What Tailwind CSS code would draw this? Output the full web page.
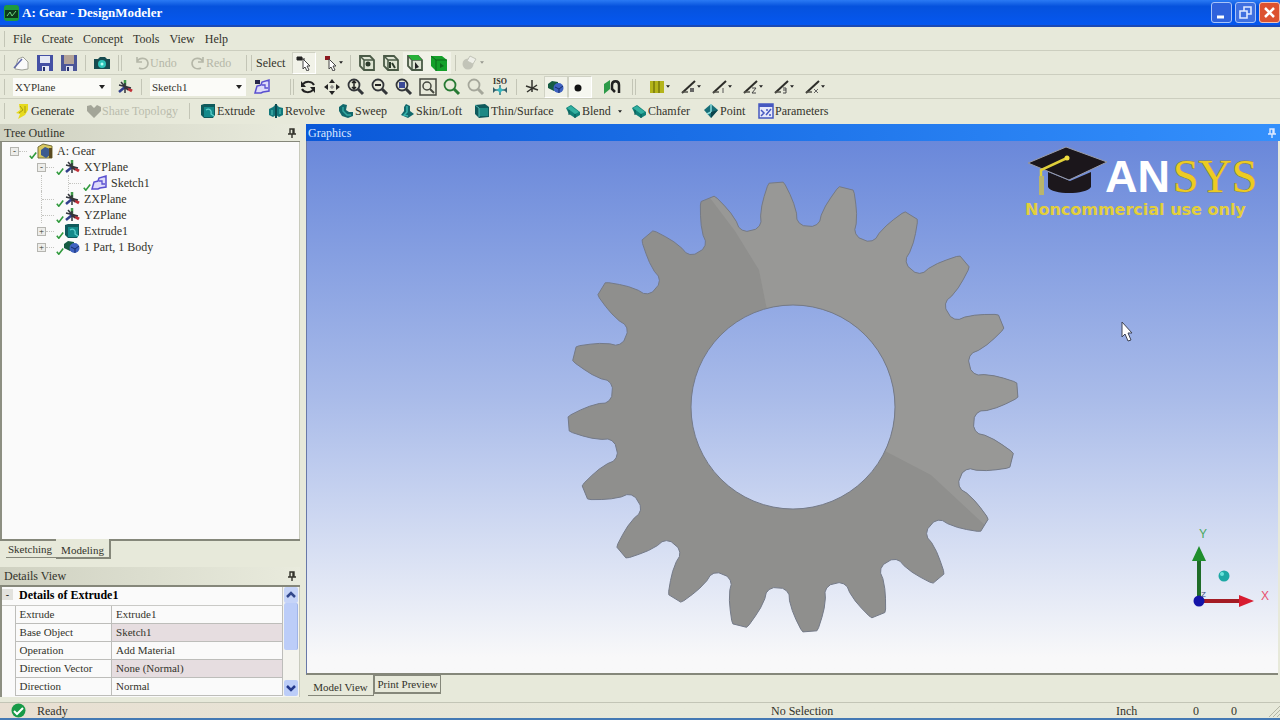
<!DOCTYPE html>
<html lang="en">

<head>
    <meta charset="UTF-8">
    <meta name="viewport" content="width=device-width, initial-scale=1.0">
    <title>A: Gear - DesignModeler</title>
    <script src="https://cdn.jsdelivr.net/npm/@tailwindcss/browser@4"></script>
</head>

<body class="h-screen overflow-hidden flex flex-col bg-[#e7e9da] text-[#33332b] text-[12px] leading-4 font-['Liberation_Serif',serif]">

    <!-- Shared icons -->
    <svg class="hidden">
        <symbol id="check" viewBox="0 0 10 10"><path d="M1 6l2.500 3L9 2" fill="none" stroke="#2f9a3c" stroke-width="2"/></symbol>
        <symbol id="axes" viewBox="0 0 16 16">
            <path d="M8 1v8" stroke="#3f9a48" stroke-width="2.500"/><path d="M8 8l7 4" stroke="#c03038" stroke-width="3"/>
            <path d="M8 8l-6 5" stroke="#32408c" stroke-width="2.500"/><path d="M2 6l12 3M8 4v10M4 3l7 8" stroke="#33363c" stroke-width="1.500"/>
        </symbol>
        <symbol id="sketch" viewBox="0 0 16 16">
            <path d="M1 14l2-7 4-1 1-3 7-2v11l-6 1-2 1z" fill="#dedbfa" stroke="#5a50d0" stroke-width="1.500"/>
            <path d="M8 6h3v3h3" fill="none" stroke="#5a50d0" stroke-width="1.300"/>
        </symbol>
        <symbol id="extrude" viewBox="0 0 16 16">
            <path d="M1 2l3-1h11v11l-2 3H4l-3-3z" fill="#0f5a5c"/><path d="M4 4h10v10H4z" fill="#14898a"/>
            <path d="M6 7c3-2 6 0 5 4l3 2" fill="none" stroke="#5cd0cc" stroke-width="1.200"/>
        </symbol>
        <symbol id="body" viewBox="0 0 16 16">
            <path d="M0 5l4-3 6 1v6l-4 3-6-3z" fill="#155c42"/><circle cx="10.500" cy="9" r="5" fill="#3f62c0"/>
            <path d="M7 8l4 2 4-3M11 10v4" fill="none" stroke="#142c6c"/>
        </symbol>
        <symbol id="wedge" viewBox="0 0 16 16">
            <path d="M1 5l5-3 9 7v3l-5 3-6-4z" fill="#108078"/><path d="M2 5l4-2 8 6-4 2z" fill="#32b0a0"/><path d="M4 7v5M10 11v4" stroke="#0a5450"/>
        </symbol>
        <symbol id="cube" viewBox="0 0 18 18">
            <path d="M2 2h10l4 4v10H6l-4-4z" fill="#dfe5d4" stroke="#4a5a46" stroke-width="1.800"/>
            <path d="M2 2l4 4h10M6 6v10" fill="none" stroke="#4a5a46" stroke-width="1.500"/>
        </symbol>
        <symbol id="lens" viewBox="0 0 18 18">
            <circle cx="7" cy="7" r="5.500" fill="none" stroke="currentColor" stroke-width="1.800"/><path d="M11 11l5 5" stroke="currentColor" stroke-width="3"/>
        </symbol>
        <symbol id="line" viewBox="0 0 16 16">
            <path d="M1 14L14 2" stroke="#2c2c28" stroke-width="2"/><path d="M1 13h6" stroke="#55554c" stroke-width="1.500"/>
        </symbol>
        <symbol id="caret" viewBox="0 0 6 4"><path d="M0 0h6L3 4z" fill="#222"/></symbol>
        <symbol id="pin" viewBox="0 0 8 10"><path d="M2 1h4v5H2zM0 6h8M4 6v4M5 1v5" fill="none" stroke="currentColor" stroke-width="1.400"/></symbol>
    </svg>

    <!-- Title bar -->
    <header class="h-[27px] shrink-0 flex items-center px-1 bg-linear-to-b from-[#2a7af4] via-[#0552dd] via-25% to-[#0557f0] border-b-2 border-[#1b49b4]">
        <svg class="size-4 mr-0.5" viewBox="0 0 16 16"><rect width="15" height="16" rx="3" fill="#1f9a3e"/><rect x="1" y="5" width="13" height="8" fill="#0d3a1a"/><path d="M3 11l3-4 2 4 4-5" fill="none" stroke="#6ad27e"/></svg>
        <h1 class="flex-1 text-white text-[13px] font-bold">A: Gear - DesignModeler</h1>
        <div class="flex gap-[3px] -mr-1">
            <button aria-label="Minimize" class="size-[21px] rounded-[3px] border border-[#a9c4f8] bg-[#2f62dc]"><svg viewBox="0 0 19 19"><path d="M5 14h7" stroke="#fff" stroke-width="3"/></svg></button>
            <button aria-label="Restore" class="size-[21px] rounded-[3px] border border-[#a9c4f8] bg-[#3f70e0]"><svg viewBox="0 0 19 19"><path d="M8 8V4h7v7h-4M4 8h7v7H4z" fill="none" stroke="#dfe9ff" stroke-width="1.600"/></svg></button>
            <button aria-label="Close" class="size-[21px] rounded-[3px] border border-[#f3c2b2] bg-[#dc5230]"><svg viewBox="0 0 19 19"><path d="M5 5l9 9M14 5l-9 9" stroke="#fff" stroke-width="2.500"/></svg></button>
        </div>
    </header>

    <!-- Menu -->
    <nav class="h-6 shrink-0 flex items-center gap-2.5 pl-1 border-b border-[#cccebf]">
        <span class="w-px h-4 -mr-0.5 bg-[#c3c5b6]"></span>
        <button>File</button>
        <button>Create</button>
        <button>Concept</button>
        <button>Tools</button>
        <button>View</button>
        <button>Help</button>
    </nav>

    <!-- File and selection toolbar -->
    <div class="h-6 shrink-0 flex items-center border-b border-[#cccebf]">
        <span class="w-px h-4 ml-1 mr-1 bg-[#c3c5b6]"></span>
        <button aria-label="New" class="w-6 flex justify-center"><svg class="size-4" viewBox="0 0 16 16"><path d="M5 4l5-2 5 5v7l-6 1-7-1z" fill="#fafafa" stroke="#a0a298"/><path d="M1 13l8-9" stroke="#6068a8" stroke-width="1.500"/></svg></button>
        <button aria-label="Save" class="w-6 flex justify-center"><svg class="size-4" viewBox="0 0 16 16"><path d="M0 0h16v16H0z" fill="#4450a4"/><path d="M3 1h10v7H3zM5 11h7v5H5z" fill="#e4e8f4"/><path d="M6 12h2v4H6z" fill="#26306c"/></svg></button>
        <button aria-label="Save as" class="w-6 flex justify-center"><svg class="size-4" viewBox="0 0 16 16"><path d="M0 0h16v16H0z" fill="#4c5698"/><path d="M3 0h10v9H3z" fill="#b4a498"/><path d="M5 11h7v5H5z" fill="#dfe2ee"/><path d="M6 12h2v4H6z" fill="#26306c"/></svg></button>
        <span class="w-px h-4 mx-1 bg-[#c3c5b6]"></span>
        <button aria-label="Image capture" class="w-6 flex justify-center"><svg class="w-[18px] h-4" viewBox="0 0 18 16"><path d="M1 4h4l2-2h5l2 2h3v10H1z" fill="#174c50"/><circle cx="9" cy="9" r="4" fill="#2cc4b8"/><circle cx="9" cy="9" r="1.500" fill="#b0fff2"/></svg></button>
        <span class="w-1 h-4 ml-1 mr-2 border-x border-[#c3c5b6]"></span>
        <button disabled class="w-[56px] flex items-center text-[#b5b7a8] ml-1"><svg class="w-4 h-4 shrink-0" viewBox="0 0 16 16"><path d="M3 2v5h5M3 7c2-5 10-5 11 1 0 5-5 7-9 5" fill="none" stroke="currentColor" stroke-width="1.600"/></svg>Undo</button>
        <button disabled class="w-[56px] flex items-center text-[#b5b7a8]"><svg class="w-4 h-4 shrink-0" viewBox="0 0 16 16"><path d="M13 2v5H8M13 7C11 2 3 2 2 8c0 5 5 7 9 5" fill="none" stroke="currentColor" stroke-width="1.600"/></svg>Redo</button>
        <span class="w-1.5 h-4 mr-1 border-x border-[#c3c5b6]"></span>
        <span class="w-9">Select</span>
        <button aria-label="Single select" class="w-6 h-[22px] flex justify-center items-center bg-[#f1f2e8] border border-[#d0d2c4] border-b-white border-r-white"><svg class="size-4" viewBox="0 0 16 16"><path d="M1 2h5v3H1zM4 4h5" fill="#222" stroke="#222"/><path d="M7 4v10l2-2 2 4 2-1-2-4h3z" fill="#fff" stroke="#444"/></svg></button>
        <button aria-label="Select mode" class="w-[34px] flex items-center justify-center"><svg class="size-4" viewBox="0 0 16 16"><path d="M2 1h5v4H2z" fill="#8c1a20"/><path d="M6 4v10l2-2 2 4 2-1-2-4h3z" fill="#fff" stroke="#444"/></svg><svg class="w-1 h-[3px]"><use href="#caret"/></svg></button>
        <span class="w-px h-4 mr-1 bg-[#c3c5b6]"></span>
        <button aria-label="Points" class="w-6 h-[22px] flex justify-center items-center"><svg class="size-[18px]" viewBox="0 0 18 18"><use href="#cube"/><circle cx="10" cy="10" r="2.500" fill="#2b3a2a"/></svg></button>
        <button aria-label="Edges" class="w-6 h-[22px] flex justify-center items-center"><svg class="size-[18px]" viewBox="0 0 18 18"><use href="#cube"/><path d="M8 8v6M10 9l3 5" stroke="#2b3a2a" stroke-width="2"/></svg></button>
        <button aria-label="Faces" class="w-6 h-[22px] flex justify-center items-center bg-[#f1f2e8]"><svg class="size-[18px]" viewBox="0 0 18 18"><use href="#cube"/><path d="M2 1h10l4 5H6z" fill="#27b038"/><path d="M9 8v7l4-2z" fill="#222"/></svg></button>
        <button aria-label="Bodies" class="w-6 h-[22px] flex justify-center items-center bg-[#f1f2e8]"><svg class="size-[18px]" viewBox="0 0 18 18"><path d="M1 2h11l5 4v11H6l-5-5z" fill="#14a02a"/><path d="M1 2l5 4h11M6 6v11" fill="none" stroke="#0c681a"/><path d="M10 9v5l4-2z" fill="#0c681a"/></svg></button>
        <span class="w-px h-4 mx-1 bg-[#c3c5b6]"></span>
        <button disabled aria-label="Extend selection" class="flex items-center"><svg class="w-[20px] h-4" viewBox="0 0 20 16"><circle cx="8" cy="9" r="5.500" fill="#c2c4b8"/><path d="M7 6l3-5 6 3-3 5z" fill="#eeefe8" stroke="#c2c4b8"/></svg><svg class="w-1 h-[3px] opacity-40"><use href="#caret"/></svg></button>
    </div>

    <!-- Plane, sketch and view toolbar -->
    <div class="h-6 shrink-0 flex items-center border-b border-[#cccebf]">
        <span class="w-px h-4 ml-1 mr-2 bg-[#c3c5b6]"></span>
        <div class="relative w-[98px] flex items-center">
            <select aria-label="Active plane" class="appearance-none w-full h-[18px] bg-[#fbfbf8] pl-0.5 text-[11px] leading-4"><option>XYPlane</option></select>
            <svg class="absolute right-1.5 w-1.5 h-1 pointer-events-none"><use href="#caret"/></svg>
        </div>
        <button aria-label="New plane" class="w-7 flex justify-center"><svg class="size-4"><use href="#axes"/></svg></button>
        <span class="w-px h-4 mr-2 ml-0.5 bg-[#c3c5b6]"></span>
        <div class="relative w-[96px] flex items-center">
            <select aria-label="Active sketch" class="appearance-none w-full h-[18px] bg-[#fbfbf8] pl-0.5 text-[11px] leading-4"><option>Sketch1</option></select>
            <svg class="absolute right-1 w-1.5 h-1 pointer-events-none"><use href="#caret"/></svg>
        </div>
        <button aria-label="New sketch" class="w-8 flex justify-center"><svg class="size-4" viewBox="0 0 16 16"><use href="#sketch"/><path d="M1 1h5v4H1z" fill="#26264a"/></svg></button>
        <span class="w-1 h-4 ml-3 mr-1 border-x border-[#c3c5b6]"></span>
        <button aria-label="Rotate" class="w-6 -ml-0.5 flex justify-center"><svg class="size-4" viewBox="0 0 16 16"><path d="M14 6C12 2 6 2 3 5M2 10c2 4 8 4 11 1" fill="none" stroke="#222" stroke-width="2"/><path d="M1 2v6h5zM15 14V8h-5z" fill="#222"/></svg></button>
        <button aria-label="Pan" class="w-6 flex justify-center"><svg class="size-4" viewBox="0 0 16 16"><path d="M8 0l3 4H5zM8 16l3-4H5zM0 8l4-3v6zM16 8l-4-3v6z" fill="#222"/><path d="M8 6v4M6 8h4" stroke="#777"/></svg></button>
        <button aria-label="Zoom" class="w-6 flex justify-center text-[#33363a]"><svg class="size-[18px]" viewBox="0 0 18 18"><use href="#lens"/><path d="M7 3v8M5 5l2-2 2 2M5 9l2 2 2-2" fill="none" stroke="#222" stroke-width="1.500"/></svg></button>
        <button aria-label="Zoom out" class="w-6 flex justify-center text-[#33363a]"><svg class="size-[18px]" viewBox="0 0 18 18"><use href="#lens"/><path d="M4 7h6" stroke="#222" stroke-width="2"/></svg></button>
        <button aria-label="Box zoom" class="w-6 flex justify-center text-[#33363a]"><svg class="size-[18px]" viewBox="0 0 18 18"><use href="#lens"/><path d="M4 4h6v6H4z" fill="#3c4a98"/></svg></button>
        <button aria-label="Zoom to fit" class="w-6 flex justify-center text-[#454840]"><svg class="size-[18px]" viewBox="0 0 18 18"><path d="M1 1h16v16H1z" fill="none" stroke="currentColor" stroke-width="1.500"/><circle cx="8" cy="8" r="4" fill="none" stroke="currentColor" stroke-width="1.500"/><path d="M11 11l4 4" stroke="currentColor" stroke-width="2"/></svg></button>
        <button aria-label="Magnifier" class="w-6 flex justify-center text-[#277a34]"><svg class="size-[18px]"><use href="#lens"/></svg></button>
        <button disabled aria-label="Previous view" class="w-6 flex justify-center text-[#a5a79b]"><svg class="size-[18px]"><use href="#lens"/></svg></button>
        <button aria-label="ISO view" class="w-6 flex flex-col items-center"><span class="text-[8px] leading-[7px] font-bold">ISO</span><svg class="w-4 h-[10px]" viewBox="0 0 16 10"><path d="M8 0v10M1 5h14" stroke="#2f7a84" stroke-width="1.500"/><path d="M5 5l3-3 3 3-3 3z" fill="#35b8c0"/><path d="M1 2v6l3-3zM15 2v6l-3-3z" fill="#35606c"/></svg></button>
        <span class="w-px h-4 ml-1 mr-[3px] bg-[#c3c5b6]"></span>
        <button aria-label="Look at plane" class="w-6 flex justify-center"><svg class="size-4" viewBox="0 0 16 16"><path d="M8 1v12M2 7l12 4M13 6L3 13" stroke="#33332e" stroke-width="1.500"/></svg></button>
        <button aria-label="Display model" class="w-6 h-[22px] flex justify-center items-center bg-[#f1f2e8] border border-[#d0d2c4] border-b-white"><svg class="size-4"><use href="#body"/></svg></button>
        <button aria-label="Display points" class="w-6 h-[22px] flex justify-center items-center bg-[#f6f7f0] border border-[#d0d2c4] border-b-white border-r-white"><svg class="size-4" viewBox="0 0 16 16"><circle cx="6" cy="9" r="3.500" fill="#111"/></svg></button>
        <button aria-label="Look at face" class="w-6 h-[22px] ml-2 flex justify-center items-center"><svg class="size-[18px]" viewBox="0 0 18 18"><path d="M1 6l6-4v9l-6 5z" fill="#2c9a48"/><path d="M9 7c0-5 7-5 7 0v8M9 7v4l3 3" fill="none" stroke="#222" stroke-width="2.500"/></svg></button>
        <span class="w-1 h-4 ml-2 mr-2 border-x border-[#c3c5b6]"></span>
        <button aria-label="Face coloring" class="w-[31px] flex items-center justify-center gap-0.5"><svg class="w-[14px] h-3" viewBox="0 0 14 12"><path d="M0 0h14v12H0z" fill="#b4b41a"/><path d="M4 0v12M9 0v12" stroke="#77780c" stroke-width="1.500"/></svg><svg class="w-1 h-[3px]"><use href="#caret"/></svg></button>
        <button aria-label="Edge coloring" class="w-[31px] flex items-center justify-center"><svg class="size-4" viewBox="0 0 16 16"><use href="#line"/><path d="M9 9h4v4H9z" fill="#666"/></svg><svg class="w-1 h-[3px]"><use href="#caret"/></svg></button>
        <button aria-label="Edge joints 1" class="w-[31px] flex items-center justify-center"><svg class="size-4" viewBox="0 0 16 16"><use href="#line"/><path d="M11 9v5" stroke="#555"/></svg><svg class="w-1 h-[3px]"><use href="#caret"/></svg></button>
        <button aria-label="Edge joints 2" class="w-[31px] flex items-center justify-center"><svg class="size-4" viewBox="0 0 16 16"><use href="#line"/><path d="M9 9h4l-4 5h4" fill="none" stroke="#444"/></svg><svg class="w-1 h-[3px]"><use href="#caret"/></svg></button>
        <button aria-label="Edge joints 3" class="w-[31px] flex items-center justify-center"><svg class="size-4" viewBox="0 0 16 16"><use href="#line"/><path d="M9 9h3v5H9M9 11h3" fill="none" stroke="#444"/></svg><svg class="w-1 h-[3px]"><use href="#caret"/></svg></button>
        <button aria-label="Edge joints x" class="w-[31px] flex items-center justify-center"><svg class="size-4" viewBox="0 0 16 16"><use href="#line"/><path d="M9 10l4 4M13 10l-4 4" fill="none" stroke="#666"/></svg><svg class="w-1 h-[3px]"><use href="#caret"/></svg></button>
    </div>

    <!-- Feature toolbar -->
    <div class="h-6 shrink-0 flex items-center">
        <span class="w-px h-4 ml-1 mr-2.5 bg-[#c3c5b6]"></span>
        <button class="w-[71px] flex items-center"><svg class="size-4 shrink-0" viewBox="0 0 16 16"><path d="M4 1h9v6l-3 5-7 4 2-5-4-1 4-3z" fill="#e6da1e"/><path d="M5 3l3 4-4 3M10 3v7" fill="none" stroke="#a89a10"/></svg>Generate</button>
        <button disabled class="w-[103px] flex items-center text-[#babcad]"><svg class="size-4 shrink-0" viewBox="0 0 16 16"><path d="M1 3l4-1 3 3 3-3 4 2v4l-7 7-7-7z" fill="#a3a598"/></svg>Share Topology</button>
        <span class="w-px h-4 mr-[10px] bg-[#c3c5b6]"></span>
        <button class="w-[68px] flex items-center gap-px"><svg class="size-4 shrink-0"><use href="#extrude"/></svg>Extrude</button>
        <button class="w-[70px] flex items-center gap-px"><svg class="size-4 shrink-0" viewBox="0 0 16 16"><path d="M8 1l3 3 4 1v7l-4 2-3-2-3 2-4-2V6l4-2z" fill="#12787c"/><path d="M8 1v14" stroke="#0b4a50" stroke-width="2"/><path d="M4 7v5M12 6v5" stroke="#57c8c0"/></svg>Revolve</button>
        <button class="w-[61px] flex items-center gap-px"><svg class="size-4 shrink-0" viewBox="0 0 16 16"><path d="M1 4l4-3 4 1-1 5 3 2 4 0v4l-5 2-6-2-3-5z" fill="#12686c"/><path d="M5 4v4l4 4h4" fill="none" stroke="#32a8a0" stroke-width="1.500"/></svg>Sweep</button>
        <button class="w-[75px] flex items-center gap-px"><svg class="size-4 shrink-0" viewBox="0 0 16 16"><path d="M7 1l4 2v5l4 3-6 4-7-3 3-4V4z" fill="#12686c"/><path d="M8 3v6l-3 3 4 1" fill="none" stroke="#38b4ac" stroke-width="1.500"/></svg>Skin/Loft</button>
        <button class="w-[91px] flex items-center gap-px"><svg class="size-4 shrink-0" viewBox="0 0 16 16"><path d="M1 2l10-1 4 3v10l-10 1-4-4z" fill="#0f5a5c"/><path d="M5 5h9v8H5z" fill="#1c8884"/><path d="M1 2l4 3v9" fill="none" stroke="#53b8b0"/></svg>Thin/Surface</button>
        <button class="w-[66px] flex items-center gap-px"><svg class="size-4 shrink-0"><use href="#wedge"/></svg>Blend<svg class="w-1 h-[3px] ml-1.5"><use href="#caret"/></svg></button>
        <button class="w-[72px] flex items-center gap-px"><svg class="size-4 shrink-0"><use href="#wedge"/></svg>Chamfer</button>
        <button class="w-[55px] flex items-center gap-px"><svg class="size-4 shrink-0" viewBox="0 0 16 16"><path d="M1 7l7-6 7 6-7 8z" fill="#176e78"/><path d="M8 1v8l-4 2" fill="none" stroke="#8adcdc" stroke-width="1.500"/><path d="M8 9l7-2-7 8z" fill="#0c444c"/></svg>Point</button>
        <button class="flex items-center gap-px"><svg class="size-4 shrink-0" viewBox="0 0 16 16"><path d="M1 1h14v14H1z" fill="#e6e8fa" stroke="#4658c0" stroke-width="1.500"/><path d="M1 1h14v3H1z" fill="#4658c0"/><path d="M3 7l3 3-3 3M8 12l5-6M8 7h2M11 12h2" fill="none" stroke="#4658c0" stroke-width="1.500"/></svg>Parameters</button>
    </div>

    <main class="flex-1 min-h-0 flex pt-px">
        <!-- Tree and details -->
        <aside class="w-[300px] shrink-0 flex flex-col mr-1.5">
            <h2 class="h-[18px] shrink-0 flex items-center justify-between pl-1 pr-1 bg-linear-to-r from-[#cfd1c1] to-[#e9ebdd] border-b border-[#85877a]">Tree Outline<svg class="w-2 h-2.5"><use href="#pin"/></svg></h2>
            <div class="flex-1 min-h-0 bg-[#fafafa] border-l-2 border-r border-l-[#8d8f82] border-r-[#c8cabc] pt-px">
                <ul id="tree"></ul>
            </div>
            <div class="h-[22px] shrink-0 flex items-start border-t-2 border-[#85877a] bg-[#e7e9da] pl-1.5 text-[11px]">
                <button class="h-[17px] w-[50px] border-b border-[#85877a] text-left pl-0.5">Sketching</button>
                <button class="h-[20px] w-[55px] pt-1 -mt-0.5 border-r-2 border-b-2 border-[#85877a] bg-[#e7e9da] leading-3">Modeling</button>
            </div>
            <h2 class="h-[20px] shrink-0 mt-1.5 flex items-center justify-between pl-1 pr-1 bg-linear-to-r from-[#cfd1c1] to-[#e9ebdd] border-b-2 border-[#85877a]">Details View<svg class="w-2 h-2.5"><use href="#pin"/></svg></h2>
            <div class="h-[110px] shrink-0 overflow-hidden flex border-l-2 border-[#8d8f82] bg-[#fafafa]">
                <table class="flex-1 self-start table-fixed border-collapse text-[11px] leading-4">
                    <colgroup><col class="w-[13px]"><col class="w-[96px]"><col class="w-[170px]"></colgroup>
                    <thead>
                        <tr class="h-[18px] align-top"><th class="p-0 pt-0.5 border-b border-[#c9c9c6]"><button aria-label="Collapse" class="block size-[11px] leading-[9px] bg-[#e2e2de] text-[10px]">-</button></th><th colspan="2" class="p-0 pl-1 text-left text-[12px] font-bold border-b border-r border-[#c9c9c6] text-black">Details of Extrude1</th></tr>
                    </thead>
                    <tbody>
                        <tr class="h-[18px] align-top"><td></td><td class="p-0 pl-1 border border-[#bdbdba]">Extrude</td><td class="p-0 pl-1 border border-[#bdbdba]">Extrude1</td></tr>
                        <tr class="h-[18px] align-top"><td></td><td class="p-0 pl-1 border border-[#bdbdba]">Base Object</td><td class="p-0 pl-1 border border-[#bdbdba] bg-[#e6dde0]">Sketch1</td></tr>
                        <tr class="h-[18px] align-top"><td></td><td class="p-0 pl-1 border border-[#bdbdba]">Operation</td><td class="p-0 pl-1 border border-[#bdbdba]">Add Material</td></tr>
                        <tr class="h-[18px] align-top"><td></td><td class="p-0 pl-1 border border-[#bdbdba]">Direction Vector</td><td class="p-0 pl-1 border border-[#bdbdba] bg-[#e6dde0]">None (Normal)</td></tr>
                        <tr class="h-[18px] align-top"><td></td><td class="p-0 pl-1 border border-[#bdbdba]">Direction</td><td class="p-0 pl-1 border border-[#bdbdba]">Normal</td></tr>
                    </tbody>
                </table>
                <div class="w-[17px] flex flex-col px-px bg-[#f4f4ee] border-r border-[#c8cabc]">
                    <button aria-label="Scroll up" class="h-4 rounded-[2px] bg-[#c6d4f8] flex items-center justify-center"><svg class="w-2.5 h-2" viewBox="0 0 10 8"><path d="M1 6l4-4 4 4" fill="none" stroke="#33488c" stroke-width="2.500"/></svg></button>
                    <div class="h-[47px] rounded-[2px] bg-[#bccdf8] border-r border-[#9fb4e8]"></div>
                    <button aria-label="Scroll down" class="h-4 mt-auto mb-px rounded-[2px] bg-[#bccdf8] flex items-center justify-center"><svg class="w-2.5 h-2" viewBox="0 0 10 8"><path d="M1 2l4 4 4-4" fill="none" stroke="#22388c" stroke-width="2.500"/></svg></button>
                </div>
            </div>
        </aside>

        <!-- Graphics -->
        <section class="flex-1 min-w-0 flex flex-col">
            <h2 class="h-[17px] shrink-0 flex items-center justify-between pl-0.5 pr-1 text-[#dce8ff] bg-linear-to-r from-[#0a58d8] to-[#3490fc]">Graphics<svg class="w-2 h-2.5"><use href="#pin"/></svg></h2>
            <div class="relative flex-1 min-h-0 mr-0.5 flex items-center justify-center border-l border-l-[#6878a8] border-b-2 border-b-[#85877a] bg-linear-to-b from-[#6a88da] from-0% via-[#a9bbe9] via-48% to-[#f8f8f9] to-97%">
                <svg class="w-[460px] h-[460px]" viewBox="-230 -230 460 460">
                    <defs><clipPath id="gearClip"><path id="gearShape" clip-rule="evenodd"/></clipPath></defs>
                    <g clip-path="url(#gearClip)">
                        <rect x="-230" y="-230" width="460" height="460" fill="#8f8f8d"/>
                        <path d="M-95-225L-58-176-34-137-27-102 0 0 92 44 138 68 195 121 230 120V-230H-95z" fill="#989896"/>
                    </g>
                    <path id="gearEdge" fill="none" stroke="#747a88" stroke-width="1"/>
                </svg>

                <!-- Product logo -->
                <svg class="absolute top-[3px] right-[14px] w-[240px] h-[78px]" viewBox="0 0 240 78">
                    <path d="M24 28v15c4 8 38 8 43 0V28L46 37z" fill="#1c171c"/>
                    <path d="M4 19L42 3l41 15-38 18z" fill="#1b161b" stroke="#9a9ca8"/>
                    <path d="M43 14L17 26v22" fill="none" stroke="#e0cf3a" stroke-width="2.500"/>
                    <path d="M15 32h5v19h-5z" fill="#b9b56c"/>
                    <circle cx="43" cy="14" r="2.500" fill="#f0dc40"/>
                    <text x="81" y="48" font-size="45" font-weight="bold" fill="#fff" font-family="Liberation Sans, sans-serif">AN</text>
                    <text x="149" y="48" font-size="46" fill="#edcb22" stroke="#8b8450" stroke-width="1" paint-order="stroke" font-family="Liberation Serif, serif">SYS</text>
                    <text x="1" y="71" font-size="16" font-weight="bold" fill="#e3cf3a" font-family="DejaVu Sans, sans-serif">Noncommercial use only</text>
                </svg>

                <!-- Mouse pointer -->
                <svg class="absolute top-[180px] right-[145px] w-3 h-[22px]" viewBox="0 0 12 22"><path d="M1 1v15l3-3 3 7 3-1-3-7h4z" fill="#fff" stroke="#3d4254"/></svg>

                <!-- Triad -->
                <svg class="absolute right-0 bottom-[58px] w-[93px] h-[90px]" viewBox="0 0 93 90">
                    <path d="M14 76V34" stroke="#1f6c28" stroke-width="4"/><path d="M14 21l7 15H7z" fill="#1f8e2c"/>
                    <path d="M14 76h44" stroke="#a41c24" stroke-width="4"/><path d="M69 76l-15-6v12z" fill="#d81c30"/>
                    <circle cx="14" cy="76" r="5.500" fill="#1414a8"/><circle cx="39" cy="51" r="5.500" fill="#1ca8a4"/><circle cx="37" cy="49" r="2" fill="#68e4dc"/>
                    <g font-size="12" font-family="Liberation Sans, sans-serif"><text x="14" y="13" fill="#4aa860">Y</text><text x="76" y="75" fill="#e85070">X</text><text x="16" y="72" font-size="8" fill="#3a4a80">Z</text></g>
                </svg>
            </div>
            <div class="h-[22px] shrink-0 flex items-start pl-0.5 text-[11px] whitespace-nowrap">
                <button class="h-[21px] w-[66px] pt-1 border-b border-r border-[#85877a]">Model View</button>
                <button class="h-[19px] w-[67px] border border-b-2 border-[#85877a]">Print Preview</button>
            </div>
        </section>
    </main>

    <!-- Status bar -->
    <footer class="h-[23px] shrink-0 pt-[5px] border-b-2 border-[#4479b4]">
        <div class="h-4 flex items-center border-t border-[#c3c5b6] bg-linear-to-r from-[#e8dfd2] to-[#e7e9da] to-50%">
            <svg class="size-[15px] ml-[11px] mr-[11px]" viewBox="0 0 15 15"><circle cx="7.500" cy="7.500" r="7" fill="#189a48"/><path d="M3 8l3 3 6-6" fill="none" stroke="#fff" stroke-width="2"/></svg>
            <span class="flex-1">Ready</span>
            <span class="w-[345px]">No Selection</span>
            <span class="w-[77px]">Inch</span>
            <span class="w-[38px]">0</span>
            <span class="w-[37px]">0</span>
            <svg class="size-3" viewBox="0 0 12 12"><path d="M1 12L12 1M5 12l7-7M9 12l3-3" stroke="#b3b5a5"/></svg>
        </div>
    </footer>

    <script>
        const nodes = [
            { label: 'A: Gear', level: 0, icon: 'project', toggle: '-' },
            { label: 'XYPlane', level: 1, icon: 'axes', toggle: '-' },
            { label: 'Sketch1', level: 2, icon: 'sketch' },
            { label: 'ZXPlane', level: 1, icon: 'axes' },
            { label: 'YZPlane', level: 1, icon: 'axes' },
            { label: 'Extrude1', level: 1, icon: 'extrude', toggle: '+' },
            { label: '1 Part, 1 Body', level: 1, icon: 'body', toggle: '+' },
        ];
        const project = '<svg class="size-4" viewBox="0 0 16 16"><path d="M1 4l5-3 9 2v12H1z" fill="#d8c860" stroke="#77703a"/><path d="M4 7l4-3 5 2v6l-4 3-5-3z" fill="#3b5a90"/><path d="M12 5h3v10h-3z" fill="#5a4a20"/></svg>';

        document.getElementById('tree').innerHTML = nodes.map(node => {
            const indents = [
                '',
                '<span class="w-[27px]"></span>',
                '<span class="w-[39px]"></span><span class="w-[15px] h-4 border-l border-dotted border-[#c4c4c0]"></span>',
            ];
            const toggle = node.toggle
                ? `<button class="size-[9px] ml-2 text-[9px] leading-[7px] border border-[#b5b5b0] bg-[#ededea]">${node.toggle}</button><span class="w-2 border-t border-dotted border-[#c4c4c0]"></span>`
                : '<span class="w-[12px]"></span><span class="w-px h-4 border-l border-dotted border-[#c4c4c0]"></span><span class="w-[12px] border-t border-dotted border-[#c4c4c0]"></span>';
            const icon = node.icon === 'project' ? project : `<svg class="size-4"><use href="#${node.icon}"/></svg>`;
            return `<li class="h-4 flex items-center">${indents[node.level]}${toggle}<svg class="size-2 mt-2 ml-0.5"><use href="#check"/></svg>${icon}<span class="ml-1">${node.label}</span></li>`;
        }).join('');

        // Gear outline: half tooth as [half width, height], tip first
        const TEETH = 20;
        const BORE = 102;
        const flank = [[7, 225], [9, 222], [13, 212], [16, 203], [18, 193], [18, 187], [20, 183], [24, 180]];
        const profile = [...flank.map(([x, y]) => [-x, y]).reverse(), ...flank];
        const points = [];
        for (let i = 0; i < TEETH; i++) {
            const a = (i * 360 / TEETH - 4.3) * Math.PI / 180;
            profile.forEach(([x, y]) => {
                points.push((x * Math.cos(a) + y * Math.sin(a)).toFixed(1) + ' ' + (x * Math.sin(a) - y * Math.cos(a)).toFixed(1));
            });
        }
        const outline = `M${points.join('L')}Z M${BORE} 0A${BORE} ${BORE} 0 1 0 ${-BORE} 0A${BORE} ${BORE} 0 1 0 ${BORE} 0Z`;
        document.getElementById('gearShape').setAttribute('d', outline);
        document.getElementById('gearEdge').setAttribute('d', outline);
    </script>

</body>

</html>
